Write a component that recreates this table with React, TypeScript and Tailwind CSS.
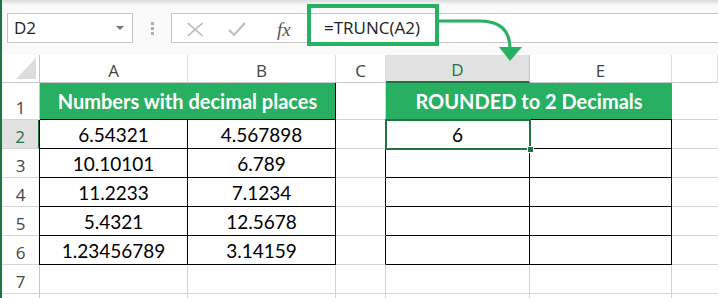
import React from 'react';

const GREEN = '#28b062';

const rows: [string, string][] = [
    ['6.54321', '4.567898'],
    ['10.10101', '6.789'],
    ['11.2233', '7.1234'],
    ['5.4321', '12.5678'],
    ['1.23456789', '3.14159'],
];

const cols = ['A', 'B', 'C', 'D', 'E', ''];

function RowHead({ n, active }: { n?: number; active?: boolean }) {
    return (
        <div
            className={`flex items-end justify-center pb-[3px] text-[17px] leading-none border-b border-[#d4d4d4] ${
                active
                    ? 'bg-[#e1e1e1] text-[#217346] border-r-2 border-r-[#217346]'
                    : 'bg-white text-[#444] border-r border-r-[#c6c6c6]'
            }`}
            style={{ fontFamily: '"Open Sans", sans-serif' }}
        >
            {n}
        </div>
    );
}

function Cell({ children, boxed, leftEdge }: { children?: React.ReactNode; boxed?: boolean; leftEdge?: boolean }) {
    return (
        <div
            className={`flex items-end justify-center pb-[4px] text-[19px] leading-none text-black border-r border-b ${
                boxed ? 'border-black' : 'border-[#d4d4d4]'
            } ${leftEdge ? 'shadow-[-1px_0_0_#000]' : ''}`}
        >
            {children}
        </div>
    );
}

export default function App() {
    return (
        <div className="relative w-[718px] h-[298px] bg-white border-l-2 border-[#217346] overflow-hidden font-['Lato',sans-serif]">
            {/* ribbon edge */}
            <div className="h-[5px] bg-gradient-to-b from-[#dcdcdc] to-[#f7f7f7]" />

            {/* formula bar */}
            <div className="h-[50px] flex items-start pt-[8px] pl-[5px] bg-[#fafafa]">
                <div className="w-[126px] h-[30px] bg-white border border-[#c6c6c6] flex items-center justify-between pl-[6px] pr-[8px]">
                    <span className="text-[17px] text-[#222]" style={{ fontFamily: '"Open Sans", sans-serif' }}>D2</span>
                    <span className="w-0 h-0 border-l-[4px] border-r-[4px] border-t-[4px] border-l-transparent border-r-transparent border-t-[#777]" />
                </div>
                <div className="w-[38px] h-[30px] flex flex-col items-center justify-center gap-[2px]">
                    <span className="w-[3px] h-[3px] bg-[#b0b0b0]" />
                    <span className="w-[3px] h-[3px] bg-[#b0b0b0]" />
                    <span className="w-[3px] h-[3px] bg-[#b0b0b0]" />
                </div>
                <div className="w-[137px] h-[30px] bg-white border border-[#c6c6c6] flex items-center">
                    <svg width="137" height="28" viewBox="0 0 137 28">
                        <path d="M16 9 L31 22 M31 9 L16 22" stroke="#bdbdbd" strokeWidth="1.6" fill="none" />
                        <path d="M58 16 L63 21 L74 9" stroke="#bdbdbd" strokeWidth="2.2" fill="none" />
                    </svg>
                </div>
                <div className="flex-1 h-[30px] bg-white border-y border-[#c6c6c6] flex items-center pl-[16px]">
                    <span className="text-[17px] text-[#222]" style={{ fontFamily: '"Open Sans", sans-serif' }}>=TRUNC(A2)</span>
                </div>
            </div>

            {/* fx label sits over the command box */}
            <span
                className="absolute left-[275px] top-[16px] text-[19px] italic text-[#555]"
                style={{ fontFamily: '"Liberation Serif", serif' }}
            >
                fx
            </span>

            {/* sheet grid */}
            <div className="grid grid-cols-[38px_148px_148px_50px_144px_142px_1fr] grid-rows-[28px_37px_29px_29px_29px_29px_29px_29px]">
                {/* select-all corner */}
                <div className="relative border-r border-b border-[#c6c6c6] bg-white">
                    <svg className="absolute right-[3px] bottom-[3px]" width="20" height="21" viewBox="0 0 20 21">
                        <polygon points="0,21 20,21 20,0" fill="#dcdcdc" />
                    </svg>
                </div>
                {cols.map((c) => (
                    <div
                        key={c || 'F'}
                        className={`flex items-center justify-center text-[17px] leading-none pt-[3px] ${
                            c === 'D'
                                ? 'bg-[#e1e1e1] text-[#217346] border-r border-r-[#c6c6c6] border-b-2 border-b-[#217346]'
                                : 'bg-white text-[#444] border-r border-r-[#dcdcdc] border-b border-b-[#c6c6c6]'
                        }`}
                        style={{ fontFamily: '"Open Sans", sans-serif' }}
                    >
                        {c}
                    </div>
                ))}

                {/* row 1: headings */}
                <RowHead n={1} />
                <div className="col-span-2 flex items-center justify-center text-white font-bold text-[20px] border-r border-b border-black" style={{ backgroundColor: GREEN }}>
                    Numbers with decimal places
                </div>
                <div className="border-r border-b border-[#d4d4d4]" />
                <div className="col-span-2 flex items-center justify-center text-white font-bold text-[20px] border-b border-black" style={{ backgroundColor: GREEN }}>
                    ROUNDED to 2 Decimals
                </div>
                <div className="border-b border-[#d4d4d4]" />

                {/* rows 2-6 */}
                {rows.map(([a, b], i) => (
                    <React.Fragment key={i}>
                        <RowHead n={i + 2} active={i === 0} />
                        <Cell boxed leftEdge>{a}</Cell>
                        <Cell boxed>{b}</Cell>
                        <div className="border-r border-b border-r-black border-b-[#d4d4d4]" />
                        <div className={`relative flex items-end justify-center pb-[4px] text-[19px] leading-none border-r border-b border-black ${i === 0 ? 'z-10' : ''}`}>
                            {i === 0 && (
                                <>
                                    6
                                    <div className="absolute left-[-1px] top-[-1px] right-[-2px] bottom-[-2px] border-2 border-[#217346]" />
                                    <div className="absolute right-[-5px] bottom-[-5px] w-[7px] h-[7px] bg-[#217346] border border-white" />
                                </>
                            )}
                        </div>
                        <Cell boxed />
                        <div className="border-b border-[#d4d4d4]" />
                    </React.Fragment>
                ))}

                {/* rows 7-8 */}
                {[7, 8].map((n) => (
                    <React.Fragment key={n}>
                        <RowHead n={n === 7 ? n : undefined} />
                        <Cell />
                        <Cell />
                        <Cell />
                        <Cell />
                        <Cell />
                        <div className="border-b border-[#d4d4d4]" />
                    </React.Fragment>
                ))}
            </div>

            {/* callout around the formula and arrow down to D */}
            <svg className="absolute left-0 top-0 pointer-events-none" width="718" height="298" viewBox="0 0 718 298">
                <rect x="307" y="6" width="128" height="38" fill="none" stroke={GREEN} strokeWidth="4" />
                <path d="M437 21 H478 Q508 21 508 49" fill="none" stroke={GREEN} strokeWidth="3" />
                <polygon points="497,47 520,47 508,61" fill={GREEN} />
            </svg>
        </div>
    );
}
